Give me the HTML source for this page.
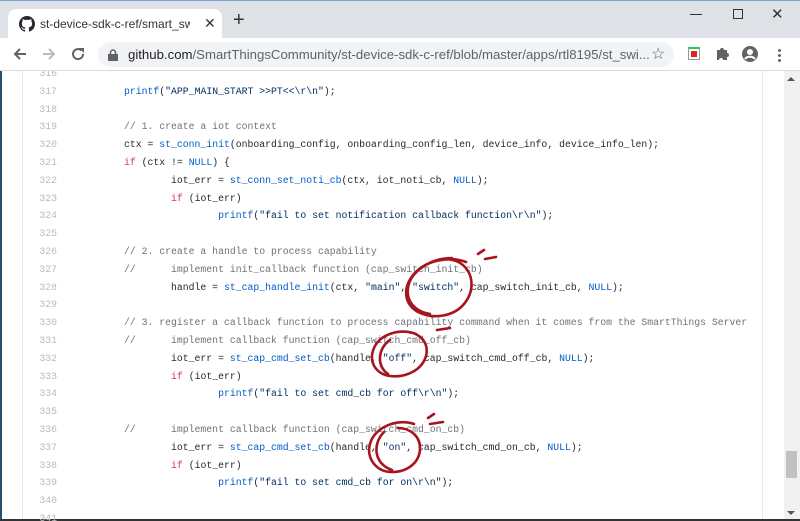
<!DOCTYPE html>
<html><head><style>
*{margin:0;padding:0;box-sizing:border-box}
body{width:800px;height:521px;overflow:hidden;background:#fff;position:relative;font-family:"Liberation Sans",sans-serif}
.tabbar{position:absolute;left:0;top:0;width:800px;height:38px;background:#dee1e6;border-top:1px solid #7aa7d6}
.tab{position:absolute;left:8px;top:8px;width:214px;height:30px;background:#fff;border-radius:8px 8px 0 0}
.tab span{position:absolute;left:32px;top:8px;font-size:12px;color:#333;white-space:nowrap;width:150px;overflow:hidden}
.addr{position:absolute;left:0;top:38px;width:800px;height:33px;background:#fff;border-bottom:1px solid #dadce0}
.url{position:absolute;left:98px;top:4px;height:25px;background:#f1f3f4;border-radius:13px;width:576px}
.url span{position:absolute;left:30px;top:5px;font-size:13.2px;color:#5f6368;white-space:nowrap}
.url b{color:#202124;font-weight:normal}
.code{position:absolute;left:0;top:71px;width:800px;height:450px;overflow:hidden}
.ln{position:absolute;left:0;width:57px;text-align:right;color:#bbb;font:9.8px/17.8px "Liberation Mono",monospace}
.cl{position:absolute;left:124px;white-space:pre;color:#24292e;font:9.8px/17.8px "Liberation Mono",monospace}
.c{color:#6a737d}.k{color:#d73a49}.f{color:#005cc5}.s{color:#032f62}
</style></head><body>
<div class="tabbar">
<div class="tab">
<svg style="position:absolute;left:11px;top:7px" width="16" height="16" viewBox="0 0 16 16"><path fill="#24292e" d="M8 0C3.6 0 0 3.6 0 8c0 3.5 2.3 6.5 5.5 7.6.4.1.5-.2.5-.4v-1.4c-2.2.5-2.7-1-2.7-1-.4-.9-.9-1.200-.9-1.200-.7-.5.1-.5.1-.5.8.1 1.200.8 1.200.8.7 1.200 1.900.9 2.300.7.1-.5.3-.9.5-1.100-1.800-.2-3.600-.9-3.600-4 0-.9.3-1.600.8-2.100-.1-.2-.4-1 .1-2.100 0 0 .7-.2 2.200.8.6-.2 1.300-.3 2-.3s1.400.1 2 .3c1.500-1 2.200-.8 2.200-.8.4 1.100.2 1.900.1 2.100.5.6.8 1.300.8 2.100 0 3.100-1.900 3.700-3.600 3.900.3.3.5.8.5 1.500v2.200c0 .2.1.5.6.4C13.700 14.500 16 11.500 16 8c0-4.400-3.600-8-8-8z"/></svg>
<span>st-device-sdk-c-ref/smart_switch</span>
<div style="position:absolute;left:196px;top:6px;font-size:14px;color:#333">✕</div>
</div>
<div style="position:absolute;left:233px;top:9px;font-size:20px;color:#333;line-height:20px">+</div>
<div style="position:absolute;left:690px;top:13px;width:12px;height:1px;background:#333"></div>
<div style="position:absolute;left:733px;top:8px;width:10px;height:10px;border:1px solid #333"></div>
<div style="position:absolute;left:771px;top:4px;font-size:15px;color:#333">✕</div>
</div>
<div class="addr">
<svg style="position:absolute;left:12px;top:8px" width="16" height="16" viewBox="0 0 16 16"><path d="M14 8H3M8 3L3 8l5 5" stroke="#5f6368" stroke-width="2" fill="none"/></svg>
<svg style="position:absolute;left:41px;top:8px" width="16" height="16" viewBox="0 0 16 16"><path d="M2 8h11M8 3l5 5-5 5" stroke="#bbb" stroke-width="2" fill="none"/></svg>
<svg style="position:absolute;left:70px;top:8px" width="16" height="16" viewBox="0 0 16 16"><path d="M13 8a5 5 0 1 1-1.500-3.500" stroke="#5f6368" stroke-width="2" fill="none"/><path d="M9 2h5v5z" fill="#5f6368"/></svg>
<div class="url">
<svg style="position:absolute;left:10px;top:7px" width="10" height="12" viewBox="0 0 10 12"><rect x="0" y="5" width="10" height="7" fill="#5f6368"/><path d="M2.500 5V3.500a2.500 2.500 0 0 1 5 0V5" stroke="#5f6368" stroke-width="1.500" fill="none"/></svg>
<span><b>github.com</b>/SmartThingsCommunity/st-device-sdk-c-ref/blob/master/apps/rtl8195/st_swi...</span>
<div style="position:absolute;left:553px;top:2px;font-size:16px;color:#5f6368;background:#f1f3f4">☆</div>
</div>
<div style="position:absolute;left:688px;top:9px;width:12px;height:13px;border:1px solid #999;border-top:2px solid #2c5"></div>
<div style="position:absolute;left:691px;top:13px;width:6px;height:6px;background:#d22"></div>
<svg style="position:absolute;left:714px;top:8px" width="16" height="16" viewBox="0 0 16 16"><path fill="#5f6368" d="M3 4h3a2 2 0 0 1 4 0h3v3a2 2 0 0 1 0 4v3H9a2 2 0 0 0-4 0H3z"/></svg>
<svg style="position:absolute;left:741px;top:7px" width="18" height="18" viewBox="0 0 18 18"><circle cx="9" cy="9" r="8" fill="#5f6368"/><circle cx="9" cy="7" r="3" fill="#fff"/><path d="M4 14c2-3 8-3 10 0" stroke="#fff" stroke-width="2" fill="none"/></svg>
<div style="position:absolute;left:778px;top:10px;width:3px;height:14px;background:radial-gradient(circle,#5f6368 1.300px,transparent 1.600px) 0 0/3px 5px"></div>
</div>
<div class="code">
<div style="position:absolute;left:0;top:0;width:2px;height:450px;background:#2b4e6a"></div>
<div style="position:absolute;left:22px;top:0;width:1px;height:450px;background:#e8e8e8"></div>
<div style="position:absolute;left:762px;top:0;width:1px;height:450px;background:#e8e8e8"></div>
<div style="position:absolute;left:784px;top:0;width:16px;height:450px;background:#f1f1f1"></div>
<div style="position:absolute;left:786px;top:380px;width:11px;height:27px;background:#c1c1c1"></div>
<div style="position:absolute;left:787px;top:6px;border:4px solid transparent;border-bottom:4px solid #555;border-top:0"></div>
<div style="position:absolute;left:787px;top:440px;border:4px solid transparent;border-top:4px solid #555;border-bottom:0"></div>
<div style="position:absolute;left:0;top:448px;width:800px;height:3px;background:#333"></div>
<div class="ln" style="top:-6px">316<br>317<br>318<br>319<br>320<br>321<br>322<br>323<br>324<br>325<br>326<br>327<br>328<br>329<br>330<br>331<br>332<br>333<br>334<br>335<br>336<br>337<br>338<br>339<br>340<br>341</div>
<div class="cl" style="top:-6px">
<span class="f">printf</span>(<span class="s">"APP_MAIN_START &gt;&gt;PT&lt;&lt;\r\n"</span>);

<span class="c">// 1. create a iot context</span>
ctx = <span class="f">st_conn_init</span>(onboarding_config, onboarding_config_len, device_info, device_info_len);
<span class="k">if</span> (ctx != <span class="f">NULL</span>) {
        iot_err = <span class="f">st_conn_set_noti_cb</span>(ctx, iot_noti_cb, <span class="f">NULL</span>);
        <span class="k">if</span> (iot_err)
                <span class="f">printf</span>(<span class="s">"fail to set notification callback function\r\n"</span>);

<span class="c">// 2. create a handle to process capability</span>
<span class="c">//      implement init_callback function (cap_switch_init_cb)</span>
        handle = <span class="f">st_cap_handle_init</span>(ctx, <span class="s">"main"</span>, <span class="s">"switch"</span>, cap_switch_init_cb, <span class="f">NULL</span>);

<span class="c">// 3. register a callback function to process capability command when it comes from the SmartThings Server</span>
<span class="c">//      implement callback function (cap_switch_cmd_off_cb)</span>
        iot_err = <span class="f">st_cap_cmd_set_cb</span>(handle, <span class="s">"off"</span>, cap_switch_cmd_off_cb, <span class="f">NULL</span>);
        <span class="k">if</span> (iot_err)
                <span class="f">printf</span>(<span class="s">"fail to set cmd_cb for off\r\n"</span>);

<span class="c">//      implement callback function (cap_switch_cmd_on_cb)</span>
        iot_err = <span class="f">st_cap_cmd_set_cb</span>(handle, <span class="s">"on"</span>, cap_switch_cmd_on_cb, <span class="f">NULL</span>);
        <span class="k">if</span> (iot_err)
                <span class="f">printf</span>(<span class="s">"fail to set cmd_cb for on\r\n"</span>);


} <span class="k">else</span> {</div>
</div>
<svg style="position:absolute;left:0;top:0" width="800" height="521" fill="none" stroke="#a8141e" stroke-width="2.6" stroke-linecap="round">
<path d="M466 262c-16-6-40-2-52 12-12 14-10 30 4 38 16 8 36 4 46-8 10-12 10-28 0-38-6-6-16-8-26-6"/>
<path d="M452 258c-22 0-42 14-44 30-2 14 8 24 22 26"/>
<path d="M478 254l6-4M485 259l11-2"/>
<path d="M416 334c-16-6-36 0-42 14-6 14 2 26 16 28 16 2 32-6 36-20 3-12-4-22-18-24"/>
<path d="M390 340c-12 8-14 26-2 34"/>
<path d="M437 330l13-2"/>
<path d="M414 424c-18-6-40 4-44 20-4 14 6 28 22 28 16 0 28-10 28-24 0-12-10-20-22-20"/>
<path d="M384 432c-12 12-10 32 8 38"/>
<path d="M428 418l6-4M430 424l13-2"/>
</svg>
</body></html>
